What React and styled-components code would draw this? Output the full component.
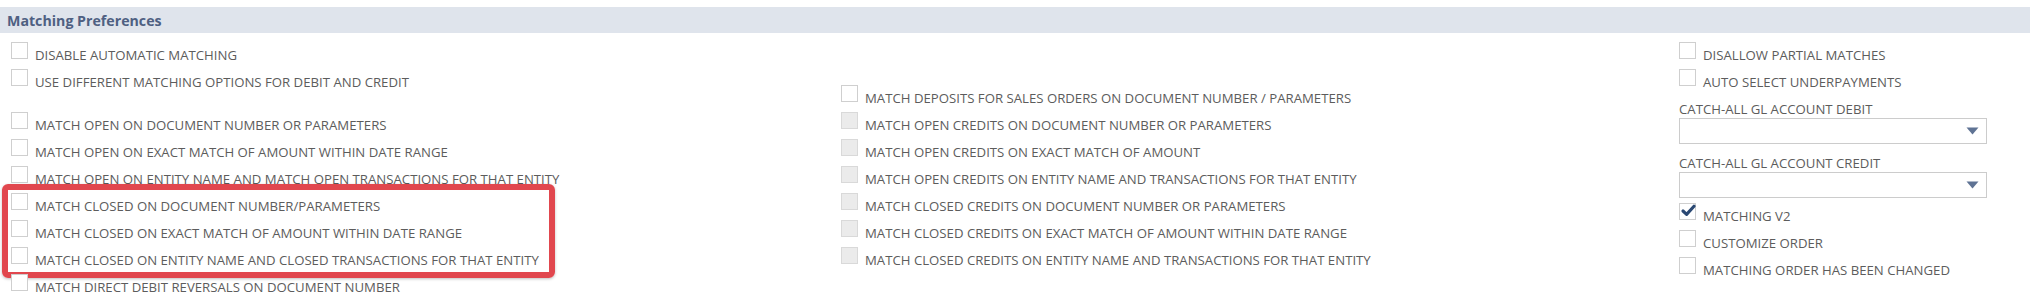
import React from "react";
import styled, { createGlobalStyle } from "styled-components";

const Global = createGlobalStyle`
  html, body { margin: 0; padding: 0; background: #ffffff; }
  body { font-family: "Open Sans", "DejaVu Sans", sans-serif; }
`;

const Page = styled.div`
  padding-top: 7px;
  width: 2030px;
  height: 298px;
  overflow: hidden;
`;

const SectionHeader = styled.div`
  height: 26px;
  background: #dfe4ec;
  padding-left: 7px;
  display: flex;
  align-items: center;
  font-size: 14.2px;
  font-weight: 700;
  color: #4e6082;
`;

const Columns = styled.div`
  display: flex;
  align-items: flex-start;
`;

const Column = styled.div`
  box-sizing: border-box;
  width: ${(p) => p.$width}px;
  padding-left: ${(p) => p.$left || 0}px;
  padding-top: ${(p) => p.$top || 0}px;
  display: flex;
  flex-direction: column;
`;

const Group = styled.div`
  display: flex;
  flex-direction: column;
  margin-top: ${(p) => p.$gap || 0}px;
`;

const Highlight = styled.div`
  position: relative;
  display: flex;
  flex-direction: column;
`;

const HighlightFrame = styled.div`
  position: absolute;
  left: -9px;
  top: -9px;
  bottom: -4px;
  width: 553px;
  box-sizing: border-box;
  border: 6px solid #e1474e;
  border-radius: 6px;
  box-shadow: 0 1px 3px rgba(0, 0, 0, 0.25);
  pointer-events: none;
`;

const Row = styled.label`
  display: flex;
  align-items: flex-start;
  height: 27px;
  margin-top: ${(p) => p.$gap || 0}px;
`;

const Box = styled.span`
  position: relative;
  box-sizing: border-box;
  flex: none;
  width: 17px;
  height: 17px;
  margin-right: 7px;
  border: 1px solid ${(p) => (p.$disabled ? "#d9d9d9" : "#cfcfcf")};
  background: ${(p) => (p.$disabled ? "#ebebeb" : "#ffffff")};
`;

const Tick = styled.svg`
  position: absolute;
  left: 1px;
  top: 0px;
  width: 15px;
  height: 13px;
`;

const Text = styled.span`
  font-size: 13.2px;
  line-height: 27px;
  color: #5c5c5c;
  white-space: nowrap;
`;

const FieldLabel = styled.div`
  font-size: 13.2px;
  line-height: 18px;
  color: #5c5c5c;
  white-space: nowrap;
  margin-top: ${(p) => p.$gap || 0}px;
`;

const Select = styled.div`
  box-sizing: border-box;
  width: 308px;
  height: 26px;
  border: 1px solid #cccccc;
  background: #ffffff;
  display: flex;
  align-items: center;
  justify-content: flex-end;
  padding-right: 7px;
`;

const Arrow = styled.svg`
  width: 13px;
  height: 8px;
`;

function Check({ label, disabled, checked, gap }) {
  return (
    <Row $gap={gap}>
      <Box $disabled={disabled}>
        {checked && (
          <Tick viewBox="0 0 15 13">
            <path
              d="M2 7 L5.6 10.4 L13 2.2"
              fill="none"
              stroke="#2a4873"
              strokeWidth="3.1"
              strokeLinecap="round"
              strokeLinejoin="round"
            />
          </Tick>
        )}
      </Box>
      <Text>{label}</Text>
    </Row>
  );
}

function Dropdown() {
  return (
    <Select>
      <Arrow viewBox="0 0 13 8">
        <path d="M0.5 0.5 H12.5 L6.5 7.5 Z" fill="#5f7394" />
      </Arrow>
    </Select>
  );
}

export default function App() {
  return (
    <>
      <Global />
      <Page>
        <SectionHeader>Matching Preferences</SectionHeader>
        <Columns>
          <Column $width={841} $left={11} $top={9}>
            <Group>
              <Check label="DISABLE AUTOMATIC MATCHING" />
              <Check label="USE DIFFERENT MATCHING OPTIONS FOR DEBIT AND CREDIT" />
            </Group>
            <Group $gap={16}>
              <Check label="MATCH OPEN ON DOCUMENT NUMBER OR PARAMETERS" />
              <Check label="MATCH OPEN ON EXACT MATCH OF AMOUNT WITHIN DATE RANGE" />
              <Check label="MATCH OPEN ON ENTITY NAME AND MATCH OPEN TRANSACTIONS FOR THAT ENTITY" />
              <Highlight>
                <Check label="MATCH CLOSED ON DOCUMENT NUMBER/PARAMETERS" />
                <Check label="MATCH CLOSED ON EXACT MATCH OF AMOUNT WITHIN DATE RANGE" />
                <Check label="MATCH CLOSED ON ENTITY NAME AND CLOSED TRANSACTIONS FOR THAT ENTITY" />
                <HighlightFrame />
              </Highlight>
              <Check label="MATCH DIRECT DEBIT REVERSALS ON DOCUMENT NUMBER" />
            </Group>
          </Column>
          <Column $width={838} $top={52}>
            <Check label="MATCH DEPOSITS FOR SALES ORDERS ON DOCUMENT NUMBER / PARAMETERS" />
            <Check disabled label="MATCH OPEN CREDITS ON DOCUMENT NUMBER OR PARAMETERS" />
            <Check disabled label="MATCH OPEN CREDITS ON EXACT MATCH OF AMOUNT" />
            <Check disabled label="MATCH OPEN CREDITS ON ENTITY NAME AND TRANSACTIONS FOR THAT ENTITY" />
            <Check disabled label="MATCH CLOSED CREDITS ON DOCUMENT NUMBER OR PARAMETERS" />
            <Check disabled label="MATCH CLOSED CREDITS ON EXACT MATCH OF AMOUNT WITHIN DATE RANGE" />
            <Check disabled label="MATCH CLOSED CREDITS ON ENTITY NAME AND TRANSACTIONS FOR THAT ENTITY" />
          </Column>
          <Column $width={308} $top={9}>
            <Check label="DISALLOW PARTIAL MATCHES" />
            <Check label="AUTO SELECT UNDERPAYMENTS" />
            <FieldLabel $gap={4}>CATCH-ALL GL ACCOUNT DEBIT</FieldLabel>
            <Dropdown />
            <FieldLabel $gap={10}>CATCH-ALL GL ACCOUNT CREDIT</FieldLabel>
            <Dropdown />
            <Check checked gap={5} label="MATCHING V2" />
            <Check label="CUSTOMIZE ORDER" />
            <Check label="MATCHING ORDER HAS BEEN CHANGED" />
          </Column>
        </Columns>
      </Page>
    </>
  );
}
